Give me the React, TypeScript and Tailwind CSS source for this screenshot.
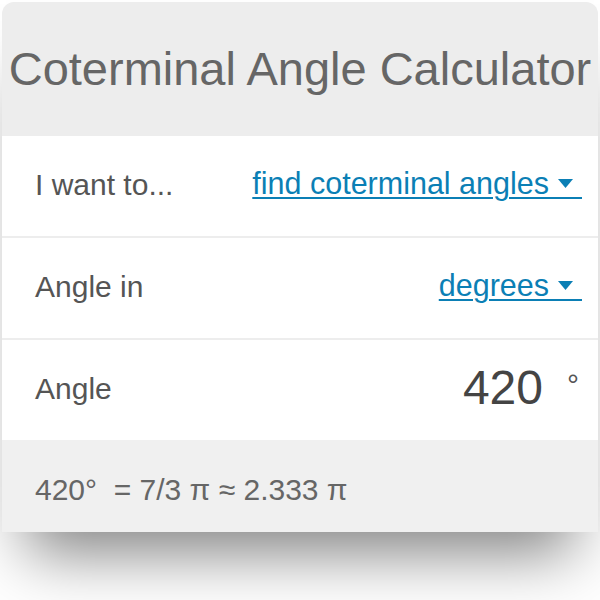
import { ReactNode } from "react"

const font = { fontFamily: '"Liberation Sans", Arial, sans-serif' }

function Row({ label, children }: { label: string; children: ReactNode }) {
  return (
    <div className="flex h-[100px] items-center justify-between bg-white pb-[4px] pl-[33px] pr-[16px]">
      <span className="text-[30px] text-[#555]">{label}</span>
      {children}
    </div>
  )
}

// dropdown-style link: underlined label followed by a small caret
function Select({ value }: { value: string }) {
  return (
    <span className="text-[30.5px] leading-[28px] text-[#0b7fb5]">
      <span className="underline decoration-2 underline-offset-[3px]">{value}</span>
      <span className="inline-block border-b-2 border-[#0b7fb5] pl-[9px] pr-[9px]">
        <svg width="15" height="9" viewBox="0 0 15 9" className="inline align-[6px]">
          <path d="M0 0h15L7.5 9z" fill="currentColor" />
        </svg>
      </span>
    </span>
  )
}

export default function App() {
  return (
    <div className="h-[600px] w-[600px] bg-white px-[2px] pt-[2px]" style={font}>
      <div className="rounded-t-[12px] bg-[#ededed] shadow-[0_45px_60px_-25px_rgba(0,0,0,0.5)]">
        <div className="flex h-[134px] items-center justify-center">
          <h1 className="text-[47px] text-[#666]">Coterminal Angle Calculator</h1>
        </div>
        <div className="flex flex-col gap-[2px]">
          <Row label="I want to...">
            <Select value="find coterminal angles" />
          </Row>
          <Row label="Angle in">
            <Select value="degrees" />
          </Row>
          <Row label="Angle">
            <div className="flex items-start pr-[3px]">
              <span className="text-[48px] text-[#444]">420</span>
              <span className="ml-[24px] mt-[18px] text-[30px] leading-none text-[#555]">°</span>
            </div>
          </Row>
        </div>
        <div className="flex h-[92px] items-center bg-[#f0f0f0] pl-[33px] pt-[6px] text-[30px] text-[#666]">
          420°&nbsp; = 7/3 π ≈ 2.333 π
        </div>
      </div>
    </div>
  )
}
